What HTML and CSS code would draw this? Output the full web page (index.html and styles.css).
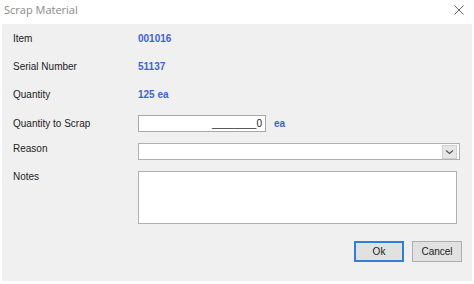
FILE: index.html
```html
<!DOCTYPE html>
<html lang="en">

<head>
    <meta charset="UTF-8">
    <meta name="viewport" content="width=device-width, initial-scale=1.0">
    <title>Scrap Material</title>
    <link rel="stylesheet" href="styles.css">
</head>

<body>

    <div class="titlebar">
        <span class="title">Scrap Material</span>
        <svg class="close" width="10" height="10" viewBox="0 0 10 10">
            <path d="M0.5 0.5 L9.5 9.5 M9.5 0.5 L0.5 9.5" stroke="#666" stroke-width="1" fill="none"/>
        </svg>
    </div>

    <div class="panel">
        <div class="row info">
            <span class="label">Item</span>
            <span class="value">001016</span>
        </div>
        <div class="row info">
            <span class="label">Serial Number</span>
            <span class="value">51137</span>
        </div>
        <div class="row info">
            <span class="label">Quantity</span>
            <span class="value">125 ea</span>
        </div>

        <div class="row scrap">
            <span class="label">Quantity to Scrap</span>
            <div class="qty-box">________0</div>
            <span class="value unit">ea</span>
        </div>

        <div class="row reason">
            <span class="label">Reason</span>
            <div class="select">
                <div class="arrow">
                    <svg width="9" height="6" viewBox="0 0 9 6">
                        <path d="M1 1.5 L4.5 4.5 L8 1.5" fill="none" stroke="#555" stroke-width="1.2"/>
                    </svg>
                </div>
            </div>
        </div>

        <div class="row notes">
            <span class="label">Notes</span>
            <div class="textarea"></div>
        </div>

        <div class="buttons">
            <div class="btn default">Ok</div>
            <div class="btn">Cancel</div>
        </div>
    </div>

</body>

</html>
```

FILE: styles.css
```css
body {
    margin: 0;
    width: 474px;
    height: 284px;
    background: #fff;
    font-family: "Liberation Sans", Arial, sans-serif;
    font-size: 10px;
    color: #222;
    overflow: hidden;
}

.titlebar {
    display: flex;
    justify-content: space-between;
    align-items: center;
    height: 24px;
    padding: 0 10px 0 4px;
}

.title {
    font-family: "Open Sans", sans-serif;
    font-size: 11px;
    color: #8a8a8a;
    margin-top: -5px;
}

.close {
    margin-top: -4px;
}

.panel {
    margin: 0 2px;
    height: 257px;
    background: #f0f0f0;
    padding: 0 0 0 11px;
    box-sizing: border-box;
}

.row {
    display: flex;
    align-items: center;
}

.label {
    width: 125px;
    flex-shrink: 0;
}

.value {
    color: #3f63d3;
    font-weight: bold;
}

.info {
    height: 28px;
}

.scrap {
    margin-top: 7px;
    height: 17px;
}

.qty-box {
    width: 123px;
    height: 15px;
    background: #fff;
    border: 1px solid #a8a8a8;
    text-align: right;
    padding-right: 3px;
    box-sizing: content-box;
    line-height: 15px;
    font-size: 10px;
}

.unit {
    margin-left: 8px;
}

.reason {
    margin-top: 11px;
    height: 17px;
    align-items: flex-start;
}

.select {
    width: 318px;
    height: 15px;
    background: #fff;
    border: 1px solid #b0b0b0;
    display: flex;
    justify-content: flex-end;
    align-items: center;
    padding-right: 2px;
}

.arrow {
    width: 13px;
    height: 12px;
    background: #e6e6e6;
    border: 1px solid #d0d0d0;
    display: flex;
    align-items: center;
    justify-content: center;
}

.notes {
    margin-top: 11px;
    align-items: flex-start;
}

.textarea {
    width: 317px;
    height: 51px;
    background: #fff;
    border: 1px solid #b0b0b0;
}

.buttons {
    display: flex;
    justify-content: flex-end;
    gap: 8px;
    margin-top: 17px;
    padding-right: 10px;
}

.btn {
    width: 48px;
    height: 19px;
    border: 1px solid #adadad;
    background: #e1e1e1;
    text-align: center;
    line-height: 19px;
    font-size: 10px;
}

.btn.default {
    border-color: #2f7fd6;
    box-shadow: inset 0 0 0 1px #2f7fd6;
}
```
